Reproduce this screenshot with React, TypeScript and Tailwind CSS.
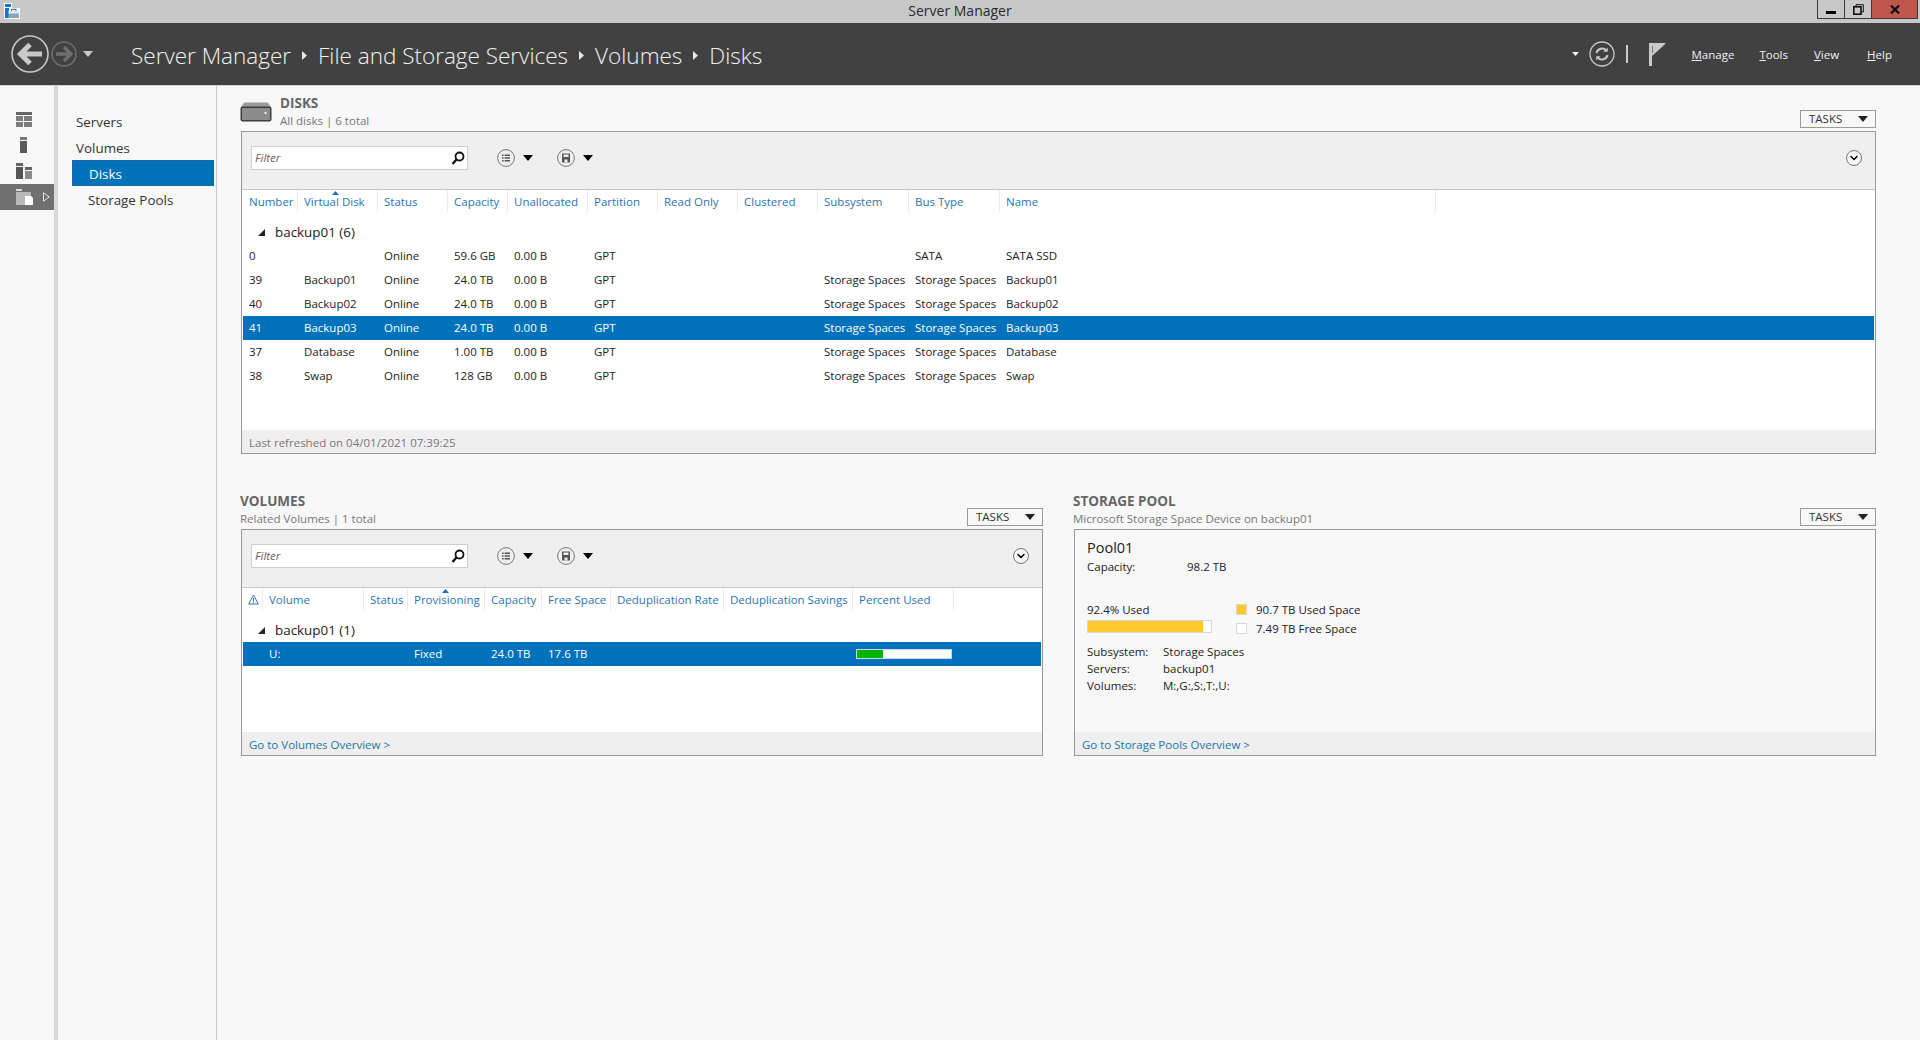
import React from 'react';
import { ChevronDown } from 'lucide-react';

const diskColumns = ['Number', 'Virtual Disk', 'Status', 'Capacity', 'Unallocated', 'Partition', 'Read Only', 'Clustered', 'Subsystem', 'Bus Type', 'Name'];
const diskGrid = 'grid grid-cols-[55px_80px_70px_60px_80px_70px_80px_80px_91px_91px_436px]';

const disks = [
  ['0', '', 'Online', '59.6 GB', '0.00 B', 'GPT', '', '', '', 'SATA', 'SATA SSD'],
  ['39', 'Backup01', 'Online', '24.0 TB', '0.00 B', 'GPT', '', '', 'Storage Spaces', 'Storage Spaces', 'Backup01'],
  ['40', 'Backup02', 'Online', '24.0 TB', '0.00 B', 'GPT', '', '', 'Storage Spaces', 'Storage Spaces', 'Backup02'],
  ['41', 'Backup03', 'Online', '24.0 TB', '0.00 B', 'GPT', '', '', 'Storage Spaces', 'Storage Spaces', 'Backup03'],
  ['37', 'Database', 'Online', '1.00 TB', '0.00 B', 'GPT', '', '', 'Storage Spaces', 'Storage Spaces', 'Database'],
  ['38', 'Swap', 'Online', '128 GB', '0.00 B', 'GPT', '', '', 'Storage Spaces', 'Storage Spaces', 'Swap'],
];

const volumeColumns = ['', 'Volume', 'Status', 'Provisioning', 'Capacity', 'Free Space', 'Deduplication Rate', 'Deduplication Savings', 'Percent Used'];
const volumeGrid = 'grid grid-cols-[20px_101px_44px_77px_57px_69px_113px_129px_101px]';

function Caret({ className = 'w-[10px] h-[6px] fill-black' }: { className?: string }) {
  return (
    <svg className={className} viewBox="0 0 10 6">
      <path d="M0 0h10L5 6z" />
    </svg>
  );
}

function Crumb() {
  return (
    <svg className="mx-[11px] w-[5px] h-[9px] fill-[#e8e8e8]" viewBox="0 0 5 9">
      <path d="M0 0l5 4.5L0 9z" />
    </svg>
  );
}

function BackIcon() {
  return (
    <svg className="w-[38px] h-[38px] shrink-0" viewBox="0 0 38 38" fill="none" stroke="#c9c9c9">
      <circle cx="19" cy="19" r="18" strokeWidth="1.6" />
      <path d="M31 19H11M19 9.5 9.5 19l9.5 9.5" strokeWidth="5" />
    </svg>
  );
}

function ForwardIcon() {
  return (
    <svg className="w-[26px] h-[26px] shrink-0" viewBox="0 0 26 26" fill="none" stroke="#6e6e6e">
      <circle cx="13" cy="13" r="12" strokeWidth="1.6" />
      <path d="M5 13h14M13 6l7 7-7 7" strokeWidth="3.4" />
    </svg>
  );
}

function RefreshIcon() {
  return (
    <svg className="w-[26px] h-[26px] shrink-0" viewBox="0 0 26 26" fill="none" stroke="#c9c9c9">
      <circle cx="13" cy="13" r="12" strokeWidth="1.3" />
      <path d="M7.5 12a5.6 5.6 0 0 1 9.7-2.6M18.5 14a5.6 5.6 0 0 1-9.7 2.6" strokeWidth="2" />
      <path d="M18.8 6.4v4.4h-4.4zM7.2 19.6v-4.4h4.4z" fill="#c9c9c9" stroke="none" />
    </svg>
  );
}

function AppIcon() {
  return (
    <svg className="w-[18px] h-[16px] ml-[2px] mt-[3px] shrink-0" viewBox="0 0 18 16">
      <path d="M2 0h8v5h8v11H2z" fill="#fff" />
      <path d="M3 1h6v3H3z" fill="#0a7ad0" />
      <path d="M3 5h4v10H3z" fill="#0a7ad0" />
      <path d="M6.5 8H17v7H6.5z" fill="#8aa6bd" />
      <path d="M6.5 8H17v2.5H6.5z" fill="#dfe8ef" />
      <path d="M9.5 8V6.3h4.5V8" fill="none" stroke="#40566a" />
    </svg>
  );
}

function DiskIcon() {
  return (
    <svg className="w-[32px] h-[20px] shrink-0" viewBox="0 0 32 20">
      <path d="M4 0.5h24l3.5 6H0.5z" fill="#9a9a9a" />
      <rect x="0.5" y="4.5" width="31" height="15" rx="2" fill="#3f3f3f" />
      <rect x="2" y="6" width="28" height="12" fill="#8c8c8c" />
      <rect x="24.5" y="10" width="2" height="2" fill="#ececec" />
    </svg>
  );
}

function SearchIcon() {
  return (
    <svg className="w-[14px] h-[14px] shrink-0" viewBox="0 0 14 14" fill="none" stroke="#111">
      <circle cx="8.5" cy="5.5" r="4" strokeWidth="1.8" />
      <path d="M5.5 8.5 1.5 13" strokeWidth="2.4" />
    </svg>
  );
}

function ListButton() {
  return (
    <div className="flex items-center gap-[8px]">
      <svg className="w-[18px] h-[18px]" viewBox="0 0 18 18" fill="none">
        <circle cx="9" cy="9" r="8.4" stroke="#777" strokeWidth="1" />
        <path d="M5 5.5h1.6v1.6H5zM5 8.2h1.6v1.6H5zM5 10.9h1.6v1.6H5zM7.6 5.5H13v1.6H7.6zM7.6 8.2H13v1.6H7.6zM7.6 10.9H13v1.6H7.6z" fill="#555" />
      </svg>
      <Caret />
    </div>
  );
}

function SaveButton() {
  return (
    <div className="flex items-center gap-[8px]">
      <svg className="w-[18px] h-[18px]" viewBox="0 0 18 18" fill="none">
        <circle cx="9" cy="9" r="8.4" stroke="#777" strokeWidth="1" />
        <path d="M5 4.5h8v9H5z" fill="#555" />
        <path d="M6.5 5.5h5v2.6h-5zM7.5 10.5h3v3h-3z" fill="#eee" />
      </svg>
      <Caret />
    </div>
  );
}

function Toolbar() {
  return (
    <div className="h-[58px] shrink-0 bg-[#efefef] border-b border-[#c8c8c8] flex items-start pt-[14px] pl-[9px] pr-[13px]">
      <div className="w-[217px] h-[24px] bg-white border border-[#cfcfcf] flex items-center justify-between pl-[3px] pr-[2px]">
        <span className="italic text-[#666]">Filter</span>
        <SearchIcon />
      </div>
      <div className="ml-[29px] mt-[3px]"><ListButton /></div>
      <div className="ml-[24px] mt-[3px]"><SaveButton /></div>
      <div className="ml-auto mt-[4px] w-[16px] h-[16px] rounded-full border border-[#777] bg-[#f6f6f6] flex items-center justify-center">
        <ChevronDown className="w-[12px] h-[12px] text-black" strokeWidth={3} />
      </div>
    </div>
  );
}

function TasksButton() {
  return (
    <div className="w-[76px] h-[18px] border border-[#9a9a9a] bg-[#f8f8f8] flex items-center justify-between pl-[8px] pr-[7px] text-[#333]">
      <span>TASKS</span>
      <Caret className="w-[10px] h-[6px] fill-[#222]" />
    </div>
  );
}

function SectionHead({ title, sub }: { title: string; sub: string }) {
  return (
    <div className="flex items-end justify-between">
      <div className="-ml-[1px]">
        <div className="h-[18px] leading-[18px] text-[13.5px] font-bold text-[#666]">{title}</div>
        <div className="h-[18px] leading-[18px] text-[#777]">{sub}</div>
      </div>
      <div className="mb-[2px]"><TasksButton /></div>
    </div>
  );
}

function HeaderCell({ label, sorted }: { label: string; sorted?: boolean }) {
  return (
    <div className="relative h-[22px] border-r border-[#ececec] pl-[6px] leading-[23px] text-[#2b74b5] whitespace-nowrap">
      {sorted && (
        <svg className="absolute left-[34px] top-[1px] w-[7px] h-[4px] fill-[#1b72b8]" viewBox="0 0 7 4">
          <path d="M3.5 0 7 4H0z" />
        </svg>
      )}
      {label}
    </div>
  );
}

function GroupRow({ label }: { label: string }) {
  return (
    <div className="mt-[8px] h-[24px] flex items-center pl-[15px] text-[13.4px] text-[#222]">
      <svg className="w-[7px] h-[7px] fill-[#222] mr-[10px]" viewBox="0 0 7 7">
        <path d="M7 0v7H0z" />
      </svg>
      {label}
    </div>
  );
}

function PanelFooter({ children, white }: { children: React.ReactNode; white?: boolean }) {
  return (
    <div className={`h-[23px] shrink-0 bg-[#efefef] flex items-center pl-[7px] pt-[2px] ${white ? 'text-[#777]' : 'text-[#2575a8]'}`}>
      {children}
    </div>
  );
}

function DisksPanel() {
  return (
    <div className="h-[323px] mt-[1px] border border-[#999] flex flex-col">
      <Toolbar />
      <div className="flex-1 bg-white px-[1px]">
        <div className={diskGrid}>
          {diskColumns.map((c, i) => (
            <HeaderCell key={c} label={c} sorted={i === 1} />
          ))}
        </div>
        <GroupRow label="backup01 (6)" />
        {disks.map((row) => {
          const selected = row[0] === '41';
          return (
            <div key={row[0]} className={`${diskGrid} h-[24px] leading-[24px] ${selected ? 'bg-[#0072bc] text-white' : 'text-[#222]'}`}>
              {row.map((cell, i) => (
                <div key={i} className="pl-[6px] whitespace-nowrap">{cell}</div>
              ))}
            </div>
          );
        })}
      </div>
      <PanelFooter white>Last refreshed on 04/01/2021 07:39:25</PanelFooter>
    </div>
  );
}

function VolumesPanel() {
  return (
    <div className="h-[227px] mt-[1px] border border-[#999] flex flex-col">
      <Toolbar />
      <div className="flex-1 bg-white px-[1px]">
        <div className={volumeGrid}>
          {volumeColumns.map((c, i) =>
            i === 0 ? (
              <div key="warn" className="h-[22px] border-r border-[#ececec] flex items-center pl-[5px]">
                <svg className="w-[11px] h-[11px]" viewBox="0 0 11 11" fill="none" stroke="#2b74b5">
                  <path d="M5.5 1 10.3 10H.7z" />
                  <path d="M5.5 4v3.5M5.5 8.2v1" />
                </svg>
              </div>
            ) : (
              <HeaderCell key={c} label={c} sorted={i === 3} />
            )
          )}
        </div>
        <GroupRow label="backup01 (1)" />
        <div className={`${volumeGrid} h-[24px] leading-[24px] bg-[#0072bc] text-white`}>
          <div />
          <div className="pl-[6px]">U:</div>
          <div />
          <div className="pl-[6px]">Fixed</div>
          <div className="pl-[6px]">24.0 TB</div>
          <div className="pl-[6px]">17.6 TB</div>
          <div />
          <div />
          <div className="pl-[3px] pt-[7px]">
            <div className="w-[96px] h-[10px] bg-white border border-[#c9d6df]">
              <div className="w-[26px] h-full bg-[#00b400]" />
            </div>
          </div>
        </div>
      </div>
      <PanelFooter>Go to Volumes Overview &gt;</PanelFooter>
    </div>
  );
}

function PoolPanel() {
  return (
    <div className="h-[227px] mt-[1px] border border-[#999] flex flex-col">
      <div className="flex-1 pl-[12px] pt-[8px] text-[#222]">
        <div className="h-[20px] leading-[20px] text-[14.5px]">Pool01</div>
        <div className="flex h-[18px] leading-[18px]">
          <div className="w-[100px]">Capacity:</div>
          <div>98.2 TB</div>
        </div>
        <div className="mt-[24px] flex">
          <div className="w-[149px]">
            <div className="h-[19px] leading-[19px]">92.4% Used</div>
            <div className="mt-[1px] w-[125px] h-[13px] bg-white border border-[#d8d8d8]">
              <div className="w-[115px] h-full bg-[#ffc82c]" />
            </div>
          </div>
          <div>
            <div className="h-[19px] flex items-center">
              <div className="w-[11px] h-[11px] bg-[#ffc82c] border border-[#d8d8d8] mr-[9px]" />
              90.7 TB Used Space
            </div>
            <div className="h-[19px] flex items-center">
              <div className="w-[11px] h-[11px] bg-white border border-[#d8d8d8] mr-[9px]" />
              7.49 TB Free Space
            </div>
          </div>
        </div>
        <div className="mt-[5px] grid grid-cols-[76px_1fr] leading-[17px]">
          <div>Subsystem:</div>
          <div>Storage Spaces</div>
          <div>Servers:</div>
          <div>backup01</div>
          <div>Volumes:</div>
          <div>M:,G:,S:,T:,U:</div>
        </div>
      </div>
      <PanelFooter>Go to Storage Pools Overview &gt;</PanelFooter>
    </div>
  );
}

function Sidebar() {
  return (
    <div className="flex shrink-0">
      <div className="w-[54px] pt-[20px] bg-[#f8f8f8]">
        <div className="h-[26px] flex items-center pl-[16px]">
          <svg className="w-[16px] h-[15px]" viewBox="0 0 16 15">
            <path d="M0 0h16v3H0z" fill="#666" />
            <path d="M0 4h7v5H0zM8 4h8v5H8zM0 10h7v5H0zM8 10h8v5H8z" fill="#7d7d7d" />
          </svg>
        </div>
        <div className="h-[26px] flex items-center pl-[20px]">
          <svg className="w-[7px] h-[16px]" viewBox="0 0 7 16">
            <path d="M0 0h7v3H0z" fill="#777" />
            <path d="M0 4h7v12H0z" fill="#5a5a5a" />
          </svg>
        </div>
        <div className="h-[26px] flex items-center pl-[16px]">
          <svg className="w-[16px] h-[16px]" viewBox="0 0 16 16">
            <path d="M0 0h7v3H0z" fill="#666" />
            <path d="M0 4h7v12H0z" fill="#555" />
            <path d="M9 4h7v3H9z" fill="#666" />
            <path d="M9 8h7v8H9z" fill="#8a8a8a" />
          </svg>
        </div>
        <div className="h-[26px] bg-[#707070] flex items-center pl-[16px]">
          <svg className="w-[17px] h-[16px]" viewBox="0 0 17 16">
            <path d="M0 0h6v2H0z" fill="#d8d8d8" />
            <path d="M0 3h15v13H0z" fill="#b9b9b9" />
            <path d="M9 7h6l2 2v7H9z" fill="#fff" />
          </svg>
          <svg className="w-[7px] h-[10px] ml-[10px]" viewBox="0 0 7 10" fill="none" stroke="#e6e6e6">
            <path d="M.5.8 6.2 5 .5 9.2z" />
          </svg>
        </div>
      </div>
      <div className="w-[4px] bg-[#d9d9d9]" />
      <div className="w-[159px] pt-[22px] border-r border-[#c8c8c8] bg-[#f8f8f8] text-[13.4px] text-[#333]">
        <div className="h-[26px] pl-[18px] pt-[2px] leading-[24px]">Servers</div>
        <div className="h-[26px] pl-[18px] pt-[2px] leading-[24px]">Volumes</div>
        <div className="h-[26px] w-[142px] ml-[14px] pl-[16px] pt-[1px] leading-[24px] bg-[#0072bc] text-white border border-dotted border-[#2f5f86]">Disks</div>
        <div className="h-[26px] pl-[30px] pt-[2px] leading-[24px]">Storage Pools</div>
      </div>
    </div>
  );
}

export default function App() {
  return (
    <div className="w-[1920px] h-[1040px] overflow-hidden flex flex-col bg-[#f8f8f8] text-[11.5px] font-['Open_Sans',sans-serif]">
      {/* window title bar */}
      <div className="h-[23px] shrink-0 bg-[#c8c8c8] grid grid-cols-[1fr_auto_1fr]">
        <AppIcon />
        <div className="text-[14px] leading-[22px] text-[#2a2a2a]">Server Manager</div>
        <div className="flex justify-end pr-[2px] items-start">
          <div className="w-[28px] h-[19px] border border-t-0 border-[#3a3a3a] flex items-end justify-center pb-[4px]">
            <div className="w-[10px] h-[3px] bg-black" />
          </div>
          <div className="w-[26px] h-[19px] border-b border-[#3a3a3a] flex items-center justify-center">
            <svg className="w-[11px] h-[11px]" viewBox="0 0 11 11" fill="none" stroke="#111">
              <path d="M3 2.5V.7h7.3V8H8" />
              <rect x=".8" y="2.8" width="7.2" height="7.4" strokeWidth="1.6" />
            </svg>
          </div>
          <div className="w-[47px] h-[19px] bg-[#c0564c] border border-t-0 border-[#3a3a3a] flex items-center justify-center">
            <svg className="w-[10px] h-[9px]" viewBox="0 0 10 9" stroke="#111" strokeWidth="2.2">
              <path d="M1 .5l8 8M9 .5l-8 8" />
            </svg>
          </div>
        </div>
      </div>

      {/* dark navigation header */}
      <div className="h-[62px] shrink-0 bg-[#414141] flex items-center text-white">
        <div className="ml-[11px]"><BackIcon /></div>
        <div className="ml-[2px]"><ForwardIcon /></div>
        <Caret className="ml-[6px] w-[10px] h-[6px] fill-[#c9c9c9]" />
        <div className="ml-[38px] pt-[3px] flex items-center text-[22.5px] font-light text-[#f2f2f2]">
          <span>Server Manager</span>
          <Crumb />
          <span>File and Storage Services</span>
          <Crumb />
          <span>Volumes</span>
          <Crumb />
          <span>Disks</span>
        </div>
        <div className="ml-auto flex items-center pr-[28px] text-[11.5px] text-[#f0f0f0]">
          <Caret className="w-[7px] h-[4px] fill-white" />
          <div className="ml-[10px]"><RefreshIcon /></div>
          <div className="ml-[11px] w-[2px] h-[18px] bg-[#c9c9c9]" />
          <svg className="ml-[21px] w-[17px] h-[23px]" viewBox="0 0 17 23">
            <path d="M0 0h3v23H0z" fill="#c9c9c9" />
            <path d="M3 0h14l-5 5-9 8z" fill="#c9c9c9" />
            <path d="M3.5 3v7" stroke="#414141" strokeWidth=".6" />
          </svg>
          <div className="ml-[26px] pt-[2px]"><u>M</u>anage</div>
          <div className="ml-[25px] pt-[2px]"><u>T</u>ools</div>
          <div className="ml-[26px] pt-[2px]"><u>V</u>iew</div>
          <div className="ml-[28px] pt-[2px]"><u>H</u>elp</div>
        </div>
      </div>

      <div className="flex-1 flex border-t border-[#d0d0d0] min-h-0">
        <Sidebar />
        <div className="flex-1 pl-[24px] pr-[44px] pt-[8px] min-w-0">
          <div className="flex items-end justify-between">
            <div className="flex items-start">
              <div className="-ml-[1px] mt-[8px] mr-[8px]"><DiskIcon /></div>
              <div>
                <div className="h-[18px] leading-[18px] text-[13.5px] font-bold text-[#666]">DISKS</div>
                <div className="h-[18px] leading-[18px] text-[#777]">All disks | 6 total</div>
              </div>
            </div>
            <div className="mb-[2px]"><TasksButton /></div>
          </div>
          <DisksPanel />

          <div className="mt-[38px] grid grid-cols-2 gap-x-[31px]">
            <div>
              <SectionHead title="VOLUMES" sub="Related Volumes | 1 total" />
              <VolumesPanel />
            </div>
            <div>
              <SectionHead title="STORAGE POOL" sub="Microsoft Storage Space Device on backup01" />
              <PoolPanel />
            </div>
          </div>
        </div>
      </div>
    </div>
  );
}
